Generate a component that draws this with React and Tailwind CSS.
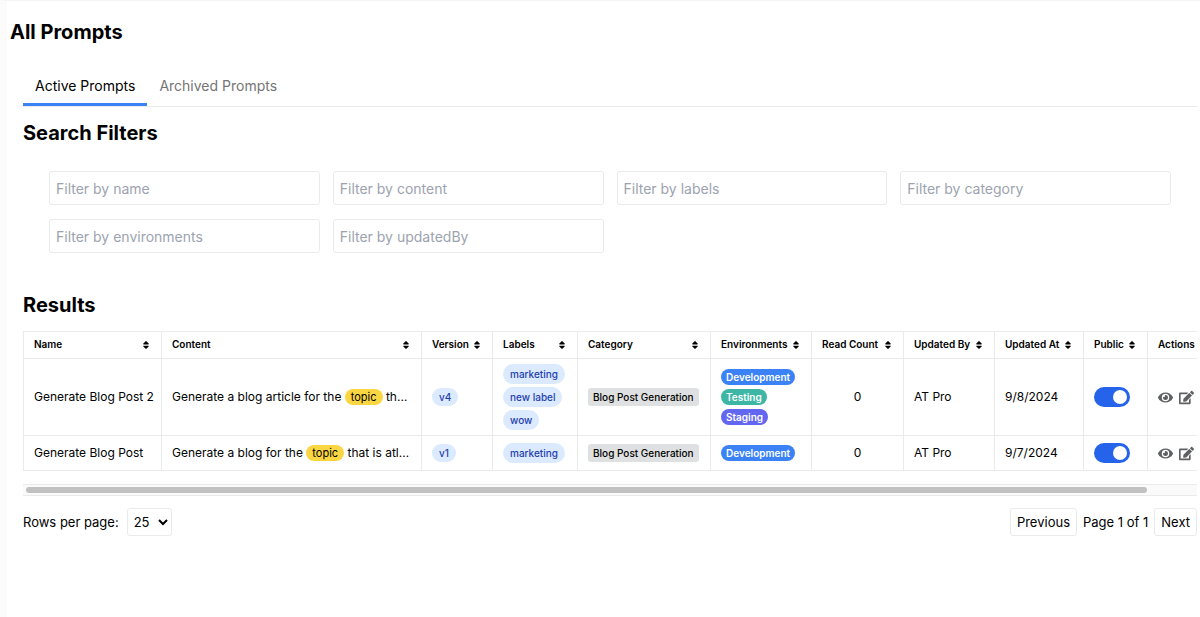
import React, { useState } from 'react';
import { FaSort, FaEye, FaEdit } from 'react-icons/fa';

const FILTERS = ['name', 'content', 'labels', 'category', 'environments', 'updatedBy'];

const COLUMNS = [
  { title: 'Name', width: 'w-[138px]' },
  { title: 'Content', width: 'w-[260px]' },
  { title: 'Version', width: 'w-[71px]' },
  { title: 'Labels', width: 'w-[85px]' },
  { title: 'Category', width: 'w-[133px]' },
  { title: 'Environments', width: 'w-[101px]' },
  { title: 'Read Count', width: 'w-[92px]' },
  { title: 'Updated By', width: 'w-[91px]' },
  { title: 'Updated At', width: 'w-[89px]' },
  { title: 'Public', width: 'w-[64px]' },
];

const ENV_COLORS = {
  Development: 'bg-[#3b82f6]',
  Testing: 'bg-[#3eb6a5]',
  Staging: 'bg-[#6366f1]',
};

const PROMPTS = [
  {
    id: 2,
    name: 'Generate Blog Post 2',
    content: ['Generate a blog article for the', 'topic', 'that is'],
    version: 'v4',
    labels: ['marketing', 'new label', 'wow'],
    category: 'Blog Post Generation',
    environments: ['Development', 'Testing', 'Staging'],
    readCount: 0,
    updatedBy: 'AT Pro',
    updatedAt: '9/8/2024',
  },
  {
    id: 1,
    name: 'Generate Blog Post',
    content: ['Generate a blog for the', 'topic', 'that is atleast'],
    version: 'v1',
    labels: ['marketing'],
    category: 'Blog Post Generation',
    environments: ['Development'],
    readCount: 0,
    updatedBy: 'AT Pro',
    updatedAt: '9/7/2024',
  },
];

function Toggle({ label }) {
  const [checked, setChecked] = useState(true);

  return (
    <label className="relative flex h-5 w-9 cursor-pointer">
      <input
        type="checkbox"
        aria-label={label}
        checked={checked}
        onChange={(e) => setChecked(e.target.checked)}
        className="peer h-5 w-9 cursor-pointer appearance-none rounded-full bg-gray-300 checked:bg-[#2563eb]"
      />
      <span className="pointer-events-none absolute top-[3px] left-[3px] h-3.5 w-3.5 rounded-full bg-white peer-checked:translate-x-4"></span>
    </label>
  );
}

function PromptRow({ prompt }) {
  const cell = 'border border-[#e9eaec] px-2.5 py-[5px]';

  return (
    <tr className="h-[35px]">
      <td className={`${cell} whitespace-nowrap`}>{prompt.name}</td>
      <td className={cell}>
        <div className="truncate">
          {prompt.content[0]}{' '}
          <span className="rounded-full bg-[#fad643] px-1.5 py-px text-[11px]">{prompt.content[1]}</span>{' '}
          {prompt.content[2]}
        </div>
      </td>
      <td className={cell}>
        <span className="inline-block rounded-full bg-blue-100 px-[7px] text-[10px] leading-[18px] font-medium text-[#1e40af]">
          {prompt.version}
        </span>
      </td>
      <td className={cell}>
        <div className="flex flex-col items-start gap-[3px]">
          {prompt.labels.map((label) => (
            <span
              key={label}
              className="rounded-full bg-blue-100 px-[7px] text-[10px] leading-5 font-medium whitespace-nowrap text-[#1e40af]"
            >
              {label}
            </span>
          ))}
        </div>
      </td>
      <td className={cell}>
        <span className="inline-block rounded-[3px] bg-[#dfe0e2] px-[5px] text-[10px] leading-[18px] font-medium whitespace-nowrap">
          {prompt.category}
        </span>
      </td>
      <td className={cell}>
        <div className="flex flex-col items-start gap-1">
          {prompt.environments.map((env) => (
            <span
              key={env}
              className={`rounded-full px-[5px] text-[10px] leading-4 font-semibold text-white ${ENV_COLORS[env]}`}
            >
              {env}
            </span>
          ))}
        </div>
      </td>
      <td className={`${cell} text-center`}>{prompt.readCount}</td>
      <td className={cell}>{prompt.updatedBy}</td>
      <td className={cell}>{prompt.updatedAt}</td>
      <td className={cell}>
        <Toggle label={`${prompt.name} is public`} />
      </td>
      <td className={cell}>
        <div className="flex items-center gap-1.5 text-[15px] text-[#5f6063]">
          <button aria-label={`View ${prompt.name}`}>
            <FaEye />
          </button>
          <button aria-label={`Edit ${prompt.name}`}>
            <FaEdit />
          </button>
        </div>
      </td>
    </tr>
  );
}

function App() {
  const [tab, setTab] = useState('active');
  const [pageSize, setPageSize] = useState('25');

  return (
    <div className="min-h-screen border-t border-l-[7px] border-t-gray-100 border-l-[#fbfbfb] bg-white pr-[3px] font-['Inter',sans-serif] text-sm text-black">
      <h1 className="px-[3px] pt-[17px] text-xl leading-7 font-bold">All Prompts</h1>

      <div className="pt-[19px] pl-4">
        <div className="flex border-b border-[#e9eaec]" role="tablist">
          <button
            role="tab"
            aria-selected={tab === 'active'}
            onClick={() => setTab('active')}
            className={`border-b-[3px] px-3 pt-[11px] pb-[7px] leading-5 ${tab === 'active' ? 'border-[#3b82f6]' : 'border-transparent text-[#757575]'}`}
          >
            Active Prompts
          </button>
          <button
            role="tab"
            aria-selected={tab === 'archived'}
            onClick={() => setTab('archived')}
            className={`border-b-[3px] px-3 pt-[11px] pb-[7px] leading-5 ${tab === 'archived' ? 'border-[#3b82f6]' : 'border-transparent text-[#757575]'}`}
          >
            Archived Prompts
          </button>
        </div>

        <h2 className="pt-3 text-xl leading-7 font-bold">Search Filters</h2>
        <div className="grid grid-cols-4 gap-x-[13px] gap-y-3.5 px-[26px] pt-6 pb-[38px]">
          {FILTERS.map((filter) => (
            <input
              key={filter}
              type="text"
              aria-label={`Filter by ${filter}`}
              placeholder={`Filter by ${filter}`}
              className="h-[34px] min-w-0 rounded-[3px] border border-[#e9eaec] px-1.5 placeholder:text-[#9ca3af]"
            />
          ))}
        </div>

        <h2 className="text-xl leading-7 font-bold">Results</h2>
        <div className="mt-3 overflow-hidden">
          <table className="w-[1224px] min-w-full table-fixed border-collapse text-left text-xs">
            <thead>
              <tr className="h-[27px] text-[10px]">
                {COLUMNS.map((column) => (
                  <th key={column.title} className={`border border-[#e9eaec] px-2.5 font-semibold ${column.width}`}>
                    <button className="flex w-full items-center justify-between whitespace-nowrap">
                      {column.title}
                      <FaSort />
                    </button>
                  </th>
                ))}
                <th className="border border-[#e9eaec] px-2.5 font-semibold">Actions</th>
              </tr>
            </thead>
            <tbody>
              {PROMPTS.map((prompt) => (
                <PromptRow key={prompt.id} prompt={prompt} />
              ))}
            </tbody>
          </table>
        </div>
        <div className="mt-[13px] border-y border-[#e9eaec] bg-[#fafafa] px-[3px] py-0.5">
          <div className="h-1.5 w-[96%] rounded-full bg-[#c1c1c1]"></div>
        </div>

        <div className="flex items-center justify-between pt-3 text-[13px]">
          <div className="flex items-center gap-2">
            <label htmlFor="page-size">Rows per page:</label>
            <select
              id="page-size"
              value={pageSize}
              onChange={(e) => setPageSize(e.target.value)}
              className="h-7 w-[45px] rounded-[3px] border border-[#e9eaec] bg-white px-0.5"
            >
              <option value="10">10</option>
              <option value="25">25</option>
              <option value="50">50</option>
            </select>
          </div>
          <div className="flex items-center gap-1.5">
            <button className="h-7 rounded-[3px] border border-[#e9eaec] px-1.5">Previous</button>
            <span>Page 1 of 1</span>
            <button className="h-7 rounded-[3px] border border-[#e9eaec] px-1.5">Next</button>
          </div>
        </div>
      </div>
    </div>
  );
}

export default App;
